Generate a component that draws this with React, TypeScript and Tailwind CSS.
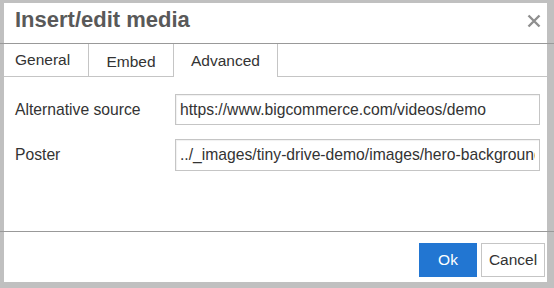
import React from "react";

const font = { fontFamily: '"Liberation Sans", Arial, sans-serif' };

export default function App() {
  return (
    <div
      className="w-[554px] h-[288px] bg-[#c0c0c0] pt-[3px] pb-[6px] flex flex-col overflow-hidden"
      style={font}
    >
      {/* Header */}
      <div className="ml-[4px] mr-[7px] h-[40px] bg-white flex items-start justify-between pl-[11px] pr-[6px] pt-[4px]">
        <div className="text-[22px] leading-[25px] font-bold text-[#595959]">Insert/edit media</div>
        <svg width="14" height="14" viewBox="0 0 14 14" className="mt-[7px]">
          <path d="M1.5 1.5 L12.5 12.5 M12.5 1.5 L1.5 12.5" stroke="#8f8f8f" strokeWidth="2.4" strokeLinecap="butt" />
        </svg>
      </div>
      <div className="h-px bg-black/20" />

      {/* Tabs */}
      <div className="ml-[4px] mr-[7px] h-[33px] bg-white flex text-[15.5px] text-[#333]">
        <div className="w-[85px] border-r border-b border-[#c5c5c5] flex items-center pl-[11px]">General</div>
        <div className="w-[85px] border-r border-b border-[#c5c5c5] flex items-center justify-center pt-[3px]">Embed</div>
        <div className="w-[104px] border-r border-[#c5c5c5] flex items-center justify-center">Advanced</div>
        <div className="flex-1 border-b border-[#c5c5c5]" />
      </div>

      {/* Body */}
      <div className="ml-[4px] mr-[7px] flex-1 bg-white pt-[17px] pl-[11px] pr-[7px] flex flex-col gap-[14px] text-[15.7px] text-[#333]">
        <div className="flex items-center h-[31px]">
          <div className="w-[160px]">Alternative source</div>
          <input
            readOnly
            value="https://www.bigcommerce.com/videos/demo"
            className="w-[365px] h-[31px] border border-[#c5c5c5] bg-white px-[4px] text-[#333] outline-none shadow-[inset_1px_1px_1px_rgba(0,0,0,0.06)]"
            style={font}
          />
        </div>
        <div className="flex items-center h-[32px]">
          <div className="w-[160px]">Poster</div>
          <input
            readOnly
            value="../_images/tiny-drive-demo/images/hero-background.jpg"
            className="w-[365px] h-[32px] border border-[#c5c5c5] bg-white px-[4px] text-[#333] outline-none shadow-[inset_1px_1px_1px_rgba(0,0,0,0.06)]"
            style={font}
          />
        </div>
      </div>
      <div className="h-px bg-black/20" />

      {/* Footer */}
      <div className="ml-[4px] mr-[7px] h-[50px] bg-white flex justify-end items-start pt-[11px] pr-[2px] gap-[4px] text-[15.5px]">
        <button className="w-[58px] h-[34px] bg-[#2276d2] text-white flex items-center justify-center" style={font}>
          Ok
        </button>
        <button className="w-[64px] h-[34px] bg-white border border-[#c5c5c5] text-[#333] flex items-center justify-center" style={font}>
          Cancel
        </button>
      </div>
    </div>
  );
}
